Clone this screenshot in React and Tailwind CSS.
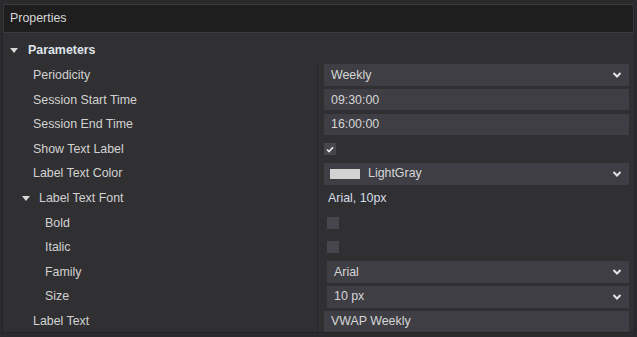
import React from "react";

const font = { fontFamily: '"Liberation Sans", Arial, sans-serif' };

function Chevron() {
  return (
    <svg width="10" height="8" viewBox="0 0 10 8" className="shrink-0">
      <path d="M1.5 2 L5 5.5 L8.5 2" fill="none" stroke="#e4e4e4" strokeWidth="2" />
    </svg>
  );
}

function Tri({ className = "" }) {
  return (
    <svg width="8" height="5" viewBox="0 0 8 5" className={className}>
      <path d="M0 0 H8 L4 5 Z" fill="#d8d8d8" />
    </svg>
  );
}

function Select({ children, nested }) {
  return (
    <div className={`h-[22px] ${nested ? "ml-[9px]" : "ml-[6px]"} mr-[5px] bg-[#3e3e44] flex items-center justify-between pl-[7px] pr-[7px] text-[#d6d6d6]`}>
      <div className="flex items-center">{children}</div>
      <Chevron />
    </div>
  );
}

function Input({ children }) {
  return (
    <div className="h-[21px] ml-[6px] mr-[5px] bg-[#3e3e44] flex items-center pl-[7px] text-[#d6d6d6]">
      {children}
    </div>
  );
}

function Check({ checked, nested }) {
  return (
    <div className={`w-[12px] h-[12px] ${nested ? "ml-[9px]" : "ml-[6px]"} bg-[#46464c] flex items-center justify-center`}>
      {checked && (
        <svg width="8" height="7" viewBox="0 0 8 7">
          <path d="M1 3.5 L3 5.5 L7 1.2" fill="none" stroke="#f0f0f0" strokeWidth="1.6" />
        </svg>
      )}
    </div>
  );
}

function Row({ label, indent, tri, children }) {
  return (
    <div className="flex h-[24.6px] shrink-0">
      <div className="w-[315px] border-r border-[#27272a] flex items-center text-[#d2d2d2]" style={{ paddingLeft: indent }}>
        {tri && <Tri className="mr-[9px]" />}
        <span>{label}</span>
      </div>
      <div className="flex-1 flex flex-col justify-center">{children}</div>
    </div>
  );
}

export default function App() {
  return (
    <div className="w-[637px] h-[337px] bg-[#2b2b2d] pt-[4px] px-[2px] text-[12.4px]" style={font}>
      <div className="h-[329px] overflow-hidden bg-[#303033] border-l border-r border-b border-[#242426] flex flex-col">
        <div className="h-[29px] shrink-0 bg-[#1e1e1f] border border-[#3b3b3e] flex items-center pl-[6px] text-[#d8d8d8]">
          Properties
        </div>
        <div className="h-[5px] shrink-0" />
        <div className="h-[25px] shrink-0 flex items-center pl-[7px]">
          <Tri className="mr-[10px]" />
          <span className="font-bold text-[#dfe3ea]">Parameters</span>
        </div>
        <Row label="Periodicity" indent={30}>
          <Select>Weekly</Select>
        </Row>
        <Row label="Session Start Time" indent={30}>
          <Input>09:30:00</Input>
        </Row>
        <Row label="Session End Time" indent={30}>
          <Input>16:00:00</Input>
        </Row>
        <Row label="Show Text Label" indent={30}>
          <Check checked />
        </Row>
        <Row label="Label Text Color" indent={30}>
          <Select>
            <span className="w-[30px] h-[10px] bg-[#d3d3d3] mr-[8px] -ml-[1px]" />
            LightGray
          </Select>
        </Row>
        <Row label="Label Text Font" indent={19} tri>
          <div className="ml-[10px] text-[#d6dce6]">Arial, 10px</div>
        </Row>
        <Row label="Bold" indent={42}>
          <Check nested />
        </Row>
        <Row label="Italic" indent={42}>
          <Check nested />
        </Row>
        <Row label="Family" indent={42}>
          <Select nested>Arial</Select>
        </Row>
        <Row label="Size" indent={42}>
          <Select nested>10 px</Select>
        </Row>
        <Row label="Label Text" indent={30}>
          <Input>VWAP Weekly</Input>
        </Row>
      </div>
    </div>
  );
}
